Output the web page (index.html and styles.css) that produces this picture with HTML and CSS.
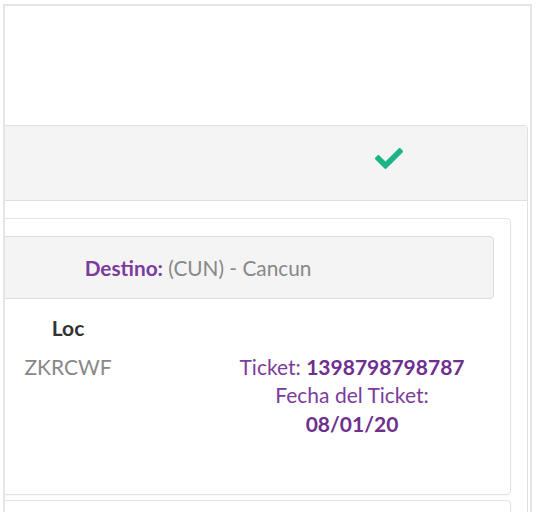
FILE: index.html
```html
<!DOCTYPE html>
<html lang="es">
<head>
<meta charset="utf-8">
<title>Reserva</title>
<link rel="stylesheet" href="styles.css">
</head>
<body>
<div class="frame">
  <div class="card">
    <div class="card-header">
      <span class="status" aria-label="Confirmado">
        <svg class="check" viewBox="0 64 512 384" width="28" height="21" aria-hidden="true"><path fill="currentColor" d="M173.898 439.404l-166.4-166.4c-9.997-9.997-9.997-26.206 0-36.204l36.203-36.204c9.997-9.998 26.207-9.998 36.204 0L192 312.69 432.095 72.596c9.997-9.997 26.207-9.997 36.204 0l36.203 36.204c9.997 9.997 9.997 26.206 0 36.204l-294.4 294.401c-9.998 9.997-26.207 9.997-36.204-.001z"/></svg>
      </span>
    </div>
    <div class="card-body">
      <div class="segment">
        <div class="dest-box"><span class="label">Destino:</span>&nbsp;(CUN) - Cancun</div>
        <div class="info-grid">
          <div class="loc-head">Loc</div>
          <div class="loc-val">ZKRCWF</div>
          <div class="ticket">
            <div>Ticket: <strong>1398798798787</strong></div>
            <div>Fecha del Ticket:</div>
            <div><strong>08/01/20</strong></div>
          </div>
        </div>
      </div>
      <div class="segment next"></div>
    </div>
  </div>
</div>
</body>
</html>
```
FILE: styles.css
```css
html, body {
  margin: 0;
  height: 512px;
  overflow: hidden;
  background: #fff;
  font-family: Lato, "Noto Sans", Arial, sans-serif;
}

.frame {
  box-sizing: border-box;
  height: 508px;
  margin: 4px 4px 0 3px;
  padding-top: 119px;
  border: 2px solid #e5e5e5;
  border-bottom: none;
  overflow: hidden;
}

.card {
  margin: 0 2px 0 -137px;
  border: 1px solid #e0e0e0;
  border-radius: 4px;
  background: #fff;
}

.card-header {
  display: flex;
  justify-content: flex-end;
  align-items: flex-start;
  box-sizing: border-box;
  height: 75px;
  padding: 22px 124px 0 0;
  background: #f4f4f4;
  border-bottom: 1px solid #e0e0e0;
  border-radius: 4px 4px 0 0;
}

.check {
  display: block;
  color: #1db587;
}

.card-body {
  padding: 17px 16px 0;
}

.segment {
  padding: 17px 16px 56px;
  border: 1px solid #e3e3e3;
  border-radius: 4px;
  box-shadow: 0 1px 2px rgba(0, 0, 0, 0.04);
}

.segment.next {
  margin-top: 5px;
  height: 40px;
  padding: 0;
}

.dest-box {
  display: flex;
  justify-content: center;
  align-items: center;
  box-sizing: border-box;
  height: 63px;
  background: #f4f4f4;
  border: 1px solid #dcdcdc;
  border-radius: 4px;
  font-size: 20.8px;
  color: #888;
}

.label {
  font-weight: 700;
  color: #7b3c9c;
}

.info-grid {
  display: grid;
  grid-template-columns: 95px 142px 142px 142px;
  row-gap: 10px;
  margin-top: 15px;
  font-size: 21px;
  line-height: 28.5px;
  text-align: center;
}

.loc-head {
  grid-column: 2;
  grid-row: 1;
  font-weight: 700;
  color: #333;
}

.loc-val {
  grid-column: 2;
  grid-row: 2;
  color: #888;
}

.ticket {
  grid-column: 4;
  grid-row: 2;
  display: flex;
  flex-direction: column;
  align-items: center;
  white-space: nowrap;
  color: #7b3c9c;
}

.ticket strong {
  font-weight: 700;
  color: #6e2f8e;
}
```
